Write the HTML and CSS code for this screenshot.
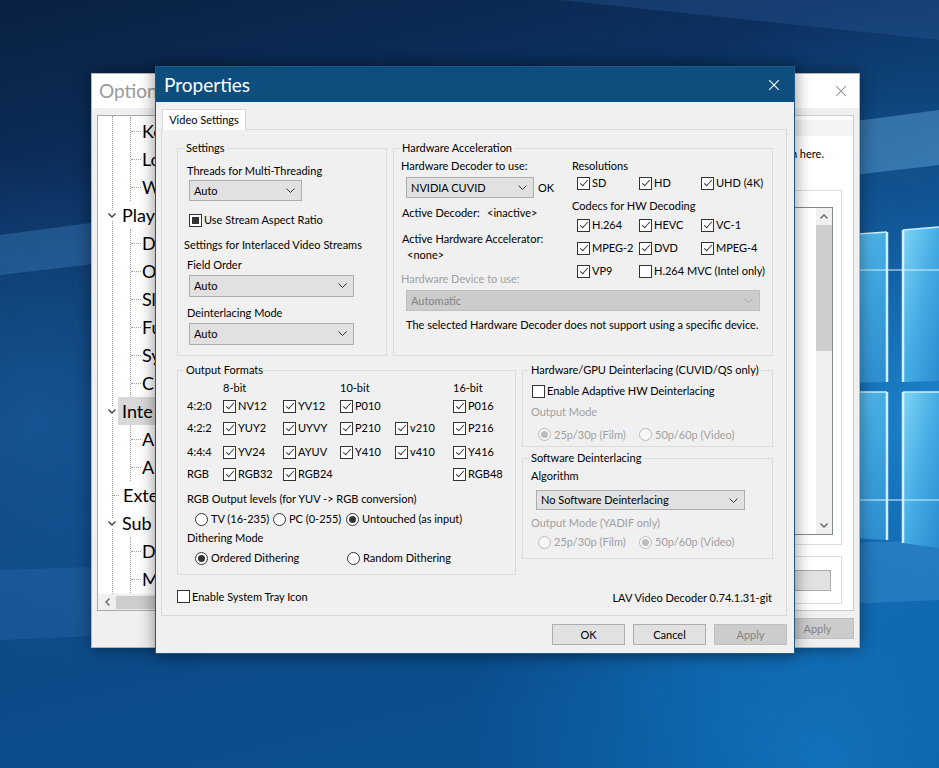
FILE: index.html
```html
<!DOCTYPE html>
<html lang="en">
<head>
  <meta charset="UTF-8">
  <meta name="viewport" content="width=device-width, initial-scale=1.0">
  <title>LAV Video Decoder - Properties</title>
  <link rel="stylesheet" href="styles.css">
</head>
<body>
  <div class="desktop">
    <svg class="wallpaper" viewBox="0 0 939 768" width="939" height="768" aria-hidden="true">
      <defs>
        <linearGradient id="sky" x1="0" y1="0" x2="0.3" y2="1">
          <stop offset="0" stop-color="#0a2142"/>
          <stop offset=".3" stop-color="#0c3363"/>
          <stop offset=".65" stop-color="#0d4682"/>
          <stop offset="1" stop-color="#0a4f8e"/>
        </linearGradient>
        <radialGradient id="glow" cx="930" cy="420" r="430" gradientUnits="userSpaceOnUse">
          <stop offset="0" stop-color="#1e88d2" stop-opacity=".95"/>
          <stop offset=".5" stop-color="#1670b8" stop-opacity=".45"/>
          <stop offset="1" stop-color="#1670b8" stop-opacity="0"/>
        </radialGradient>
        <radialGradient id="glow2" cx="820" cy="760" r="360" gradientUnits="userSpaceOnUse">
          <stop offset="0" stop-color="#1278c4" stop-opacity=".8"/>
          <stop offset="1" stop-color="#1278c4" stop-opacity="0"/>
        </radialGradient>
        <radialGradient id="glow3" cx="40" cy="420" r="260" gradientUnits="userSpaceOnUse">
          <stop offset="0" stop-color="#1a5c9e" stop-opacity=".7"/>
          <stop offset="1" stop-color="#1a5c9e" stop-opacity="0"/>
        </radialGradient>
        <linearGradient id="beam" x1="0" y1="0" x2="1" y2="0">
          <stop offset="0" stop-color="#4a8fd4" stop-opacity=".3"/>
          <stop offset="1" stop-color="#7cc4f5" stop-opacity=".35"/>
        </linearGradient>
        <linearGradient id="pane" x1="0" y1="0" x2="1" y2="1">
          <stop offset="0" stop-color="#7fd4f6"/>
          <stop offset=".5" stop-color="#45ade4"/>
          <stop offset="1" stop-color="#2a8cd0"/>
        </linearGradient>
      </defs>
      <rect width="939" height="768" fill="url(#sky)"/>
      <rect width="939" height="768" fill="url(#glow)"/>
      <rect width="939" height="768" fill="url(#glow2)"/>
      <rect width="939" height="768" fill="url(#glow3)"/>
      <polygon points="0,235 939,110 939,165 0,275" fill="url(#beam)"/>
      <polygon points="0,570 939,540 939,600 0,640" fill="url(#beam)" opacity=".5"/>
      <polygon points="560,0 939,0 939,40" fill="#2a5d9a" opacity=".35"/>
      <polygon points="800,238 887,232 887,382 800,384" fill="url(#pane)"/>
      <polygon points="903,230 939,227 939,381 903,382" fill="url(#pane)"/>
      <polygon points="800,392 887,392 887,540 800,535" fill="url(#pane)"/>
      <polygon points="903,392 939,392 939,548 903,543" fill="url(#pane)"/>
      <path d="M887 232V382M887 392V540M903 230V382M903 392V543" stroke="#e8faff" stroke-width="2.5" opacity=".9"/>
      <path d="M800 238L887 232M903 230L939 227M800 392H887M903 392H939" stroke="#c8f0ff" stroke-width="1.5"/>
      <path d="M860 270H939M860 500H939" stroke="#d6f3ff" stroke-width="2" opacity=".5"/>
    </svg>

    <!-- player options window, behind the dialog -->
    <div class="window options">
      <div class="titlebar">
        <span class="title">Option</span>
        <svg class="close" viewBox="0 0 10 10"><path d="M0 0L10 10M10 0L0 10"/></svg>
      </div>
      <div class="opt-body">
        <div class="tree">
          <div class="tree-list">
            <div class="kids">
              <div class="node">Ke</div>
              <div class="node">Lo</div>
              <div class="node">W</div>
            </div>
            <div class="node root">
              <span class="twisty"><svg width="8" height="5" viewBox="0 0 8 5"><path d="M.5.5L4 4 7.5.5"/></svg></span>
              <span class="label">Play</span>
            </div>
            <div class="kids">
              <div class="node">D</div>
              <div class="node">O</div>
              <div class="node">Sl</div>
              <div class="node">Fu</div>
              <div class="node">Sy</div>
              <div class="node">C</div>
            </div>
            <div class="node root">
              <span class="twisty"><svg width="8" height="5" viewBox="0 0 8 5"><path d="M.5.5L4 4 7.5.5"/></svg></span>
              <span class="label selected">Inte</span>
            </div>
            <div class="kids">
              <div class="node">A</div>
              <div class="node">A</div>
            </div>
            <div class="node root leaf"><span class="label">Exte</span></div>
            <div class="node root">
              <span class="twisty"><svg width="8" height="5" viewBox="0 0 8 5"><path d="M.5.5L4 4 7.5.5"/></svg></span>
              <span class="label">Sub</span>
            </div>
            <div class="kids">
              <div class="node">D</div>
              <div class="node">M</div>
            </div>
          </div>
          <div class="hscroll">
            <svg class="arrow-left" viewBox="0 0 5 8"><path d="M4.5.5L1 4l3.5 3.5"/></svg>
            <div class="hthumb"></div>
          </div>
        </div>
        <div class="opt-panel">
          <div class="opt-head"></div>
          <p class="opt-hint">the settings in here.</p>
          <div class="opt-frame">
            <div class="listbox">
              <div class="vscroll">
                <div class="varrow"><svg viewBox="0 0 8 5"><path d="M.5 4.5L4 1l3.5 3.5"/></svg></div>
                <div class="vthumb"></div>
                <div class="vtrack"></div>
                <div class="varrow"><svg viewBox="0 0 8 5"><path d="M.5.5L4 4l3.5-3.5"/></svg></div>
              </div>
            </div>
          </div>
          <div class="opt-frame small">
            <div class="opt-field"></div>
          </div>
        </div>
      </div>
      <div class="opt-buttons">
        <button class="btn" disabled>Apply</button>
      </div>
    </div>

    <!-- LAV video decoder properties dialog -->
    <div class="window props">
      <div class="titlebar">
        <span class="title">Properties</span>
        <svg class="close" viewBox="0 0 10 10"><path d="M0 0L10 10M10 0L0 10"/></svg>
      </div>
      <div class="dlg-body">
        <div class="tabs"><div class="tab">Video Settings</div></div>
        <div class="tabpage">
          <div class="row1">
            <fieldset class="group g-settings">
              <legend>Settings</legend>
              <div class="gbody">
                <div class="threads-label">Threads for Multi-Threading</div>
                <div class="combo threads-combo"><span>Auto</span><svg class="chev" viewBox="0 0 9 5"><path d="M.5.5l4 4 4-4"/></svg></div>
                <label class="chk aspect"><span class="box mixed"></span>Use Stream Aspect Ratio</label>
                <div class="interlaced">Settings for Interlaced Video Streams</div>
                <div class="field-label">Field Order</div>
                <div class="combo wide-combo"><span>Auto</span><svg class="chev" viewBox="0 0 9 5"><path d="M.5.5l4 4 4-4"/></svg></div>
                <div class="deint-label">Deinterlacing Mode</div>
                <div class="combo wide-combo"><span>Auto</span><svg class="chev" viewBox="0 0 9 5"><path d="M.5.5l4 4 4-4"/></svg></div>
              </div>
            </fieldset>

            <fieldset class="group g-hw">
              <legend>Hardware Acceleration</legend>
              <div class="gbody hw-body">
                <div class="hw-top">
                  <div class="hw-left">
                    <div>Hardware Decoder to use:</div>
                    <div class="decoder-row">
                      <div class="combo decoder-combo"><span>NVIDIA CUVID</span><svg class="chev" viewBox="0 0 9 5"><path d="M.5.5l4 4 4-4"/></svg></div>
                      <span>OK</span>
                    </div>
                    <div class="active-row"><span class="active-key">Active Decoder:</span><span>&lt;inactive&gt;</span></div>
                    <div class="accel-label">Active Hardware Accelerator:</div>
                    <div class="accel-value">&lt;none&gt;</div>
                    <div class="device-label disabled">Hardware Device to use:</div>
                  </div>
                  <div class="hw-right">
                    <div>Resolutions</div>
                    <div class="cb-grid res-grid">
                      <label class="chk"><span class="box on"></span>SD</label>
                      <label class="chk"><span class="box on"></span>HD</label>
                      <label class="chk"><span class="box on"></span>UHD (4K)</label>
                    </div>
                    <div class="codecs-label">Codecs for HW Decoding</div>
                    <div class="cb-grid codec-grid">
                      <label class="chk"><span class="box on"></span>H.264</label>
                      <label class="chk"><span class="box on"></span>HEVC</label>
                      <label class="chk"><span class="box on"></span>VC-1</label>
                      <label class="chk"><span class="box on"></span>MPEG-2</label>
                      <label class="chk"><span class="box on"></span>DVD</label>
                      <label class="chk"><span class="box on"></span>MPEG-4</label>
                      <label class="chk"><span class="box on"></span>VP9</label>
                      <label class="chk"><span class="box"></span>H.264 MVC (Intel only)</label>
                    </div>
                  </div>
                </div>
                <div class="combo disabled device-combo"><span>Automatic</span><svg class="chev" viewBox="0 0 9 5"><path d="M.5.5l4 4 4-4"/></svg></div>
                <div class="hw-note">The selected Hardware Decoder does not support using a specific device.</div>
              </div>
            </fieldset>
          </div>

          <div class="row2">
            <fieldset class="group g-output">
              <legend>Output Formats</legend>
              <div class="gbody">
                <div class="fmt-grid">
                  <span></span><span>8-bit</span><span></span><span>10-bit</span><span></span><span>16-bit</span>
                  <span>4:2:0</span>
                  <label class="chk"><span class="box on"></span>NV12</label>
                  <label class="chk"><span class="box on"></span>YV12</label>
                  <label class="chk"><span class="box on"></span>P010</label>
                  <span></span>
                  <label class="chk"><span class="box on"></span>P016</label>
                  <span>4:2:2</span>
                  <label class="chk"><span class="box on"></span>YUY2</label>
                  <label class="chk"><span class="box on"></span>UYVY</label>
                  <label class="chk"><span class="box on"></span>P210</label>
                  <label class="chk"><span class="box on"></span>v210</label>
                  <label class="chk"><span class="box on"></span>P216</label>
                  <span>4:4:4</span>
                  <label class="chk"><span class="box on"></span>YV24</label>
                  <label class="chk"><span class="box on"></span>AYUV</label>
                  <label class="chk"><span class="box on"></span>Y410</label>
                  <label class="chk"><span class="box on"></span>v410</label>
                  <label class="chk"><span class="box on"></span>Y416</label>
                  <span>RGB</span>
                  <label class="chk"><span class="box on"></span>RGB32</label>
                  <label class="chk"><span class="box on"></span>RGB24</label>
                  <span></span><span></span>
                  <label class="chk"><span class="box on"></span>RGB48</label>
                </div>
                <div class="levels-label">RGB Output levels (for YUV -&gt; RGB conversion)</div>
                <div class="radio-row levels-row">
                  <label class="opt w78"><span class="radio"></span>TV (16-235)</label>
                  <label class="opt w73"><span class="radio"></span>PC (0-255)</label>
                  <label class="opt"><span class="radio on"></span>Untouched (as input)</label>
                </div>
                <div class="dither-label">Dithering Mode</div>
                <div class="radio-row dither-row">
                  <label class="opt w152"><span class="radio on"></span>Ordered Dithering</label>
                  <label class="opt"><span class="radio"></span>Random Dithering</label>
                </div>
              </div>
            </fieldset>

            <div class="right-col">
              <fieldset class="group g-hwdeint">
                <legend>Hardware/GPU Deinterlacing (CUVID/QS only)</legend>
                <div class="gbody">
                  <label class="chk adaptive"><span class="box"></span>Enable Adaptive HW Deinterlacing</label>
                  <div class="disabled mode-label">Output Mode</div>
                  <div class="radio-row mode-row">
                    <label class="opt disabled w101"><span class="radio on"></span>25p/30p (Film)</label>
                    <label class="opt disabled"><span class="radio"></span>50p/60p (Video)</label>
                  </div>
                </div>
              </fieldset>
              <fieldset class="group g-swdeint">
                <legend>Software Deinterlacing</legend>
                <div class="gbody">
                  <div class="algo-label">Algorithm</div>
                  <div class="combo algo-combo"><span>No Software Deinterlacing</span><svg class="chev" viewBox="0 0 9 5"><path d="M.5.5l4 4 4-4"/></svg></div>
                  <div class="disabled yadif-label">Output Mode (YADIF only)</div>
                  <div class="radio-row yadif-row">
                    <label class="opt disabled w101"><span class="radio"></span>25p/30p (Film)</label>
                    <label class="opt disabled"><span class="radio on"></span>50p/60p (Video)</label>
                  </div>
                </div>
              </fieldset>
            </div>
          </div>

          <div class="tray-row">
            <label class="chk"><span class="box"></span>Enable System Tray Icon</label>
            <span class="version">LAV Video Decoder 0.74.1.31-git</span>
          </div>
        </div>
        <div class="dlg-buttons">
          <button class="btn">OK</button>
          <button class="btn">Cancel</button>
          <button class="btn" disabled>Apply</button>
        </div>
      </div>
    </div>
  </div>
</body>
</html>
```

FILE: styles.css
```css
/* Base */
* {
  margin: 0;
  padding: 0;
  box-sizing: border-box;
}

body {
  width: 939px;
  height: 768px;
  overflow: hidden;
  font-family: Lato, "Noto Sans", sans-serif;
  color: #000;
}

.desktop {
  position: relative;
  width: 939px;
  height: 768px;
  overflow: hidden;
  background: #0b3a70;
}

.wallpaper {
  position: absolute;
  left: 0;
  top: 0;
  display: block;
}

/* Windows */
.window {
  position: absolute;
  display: flex;
  flex-direction: column;
  background: #f0f0f0;
  box-shadow: 0 0 16px rgba(0, 0, 0, 0.45);
}

.options {
  left: 91px;
  top: 73px;
  width: 769px;
  height: 575px;
  border: 1px solid #b4b4b4;
}

.props {
  left: 155px;
  top: 66px;
  width: 640px;
  height: 588px;
  border: 1px solid #1c5a8a;
}

.titlebar {
  display: flex;
  align-items: center;
  flex: none;
}

.title {
  font-size: 19px;
  line-height: 24px;
}

.close {
  margin-left: auto;
  width: 10px;
  height: 10px;
  fill: none;
  stroke-width: 1.1;
}

.options .titlebar {
  height: 34px;
  background: #fff;
  padding: 0 13px 0 7px;
}

.options .title {
  color: #9a9a9a;
}

.options .close {
  stroke: #999;
}

.props .titlebar {
  height: 35px;
  background: #0e4e7e;
  padding: 0 15px 0 8px;
}

.props .title {
  color: #fff;
}

.props .close {
  stroke: #fff;
}

/* Options window content */
.opt-body {
  display: flex;
  padding: 7px 5px 0 5px;
}

.tree {
  width: 200px;
  height: 496px;
  flex: none;
  display: flex;
  flex-direction: column;
  border: 1px solid #a9a9a9;
  background: #fff;
  font-size: 18px;
}

.tree-list {
  flex: 1;
  margin-left: 14px;
  padding-top: 1px;
  border-left: 1px dotted #a0a0a0;
}

.node {
  height: 28px;
  display: flex;
  align-items: center;
  white-space: nowrap;
}

.kids {
  margin-left: 17px;
  border-left: 1px dotted #a0a0a0;
}

.kids .node::before {
  content: "";
  flex: none;
  width: 10px;
  margin-right: 1px;
  border-top: 1px dotted #a0a0a0;
}

.twisty {
  flex: none;
  width: 10px;
  height: 10px;
  margin-left: -6px;
  display: flex;
  align-items: center;
  justify-content: center;
  background: #fff;
}

.twisty svg {
  display: block;
  width: 8px;
  height: 5px;
  fill: none;
  stroke: #404040;
  stroke-width: 1.4;
}

.root .label {
  margin-left: 1px;
  padding: 0 4px;
  line-height: 28px;
}

.leaf::before {
  content: "";
  flex: none;
  width: 6px;
  border-top: 1px dotted #a0a0a0;
}

.leaf .label {
  margin-left: 0;
}

.label.selected {
  background: #d9d9d9;
}

.hscroll {
  height: 16px;
  flex: none;
  display: flex;
  align-items: center;
  padding-left: 7px;
  background: #f0f0f0;
}

.arrow-left {
  width: 5px;
  height: 8px;
  fill: none;
  stroke: #606060;
  stroke-width: 1.3;
}

.hthumb {
  flex: 1;
  height: 13px;
  margin-left: 6px;
  background: #cdcdcd;
}

.opt-panel {
  flex: 1;
  height: 496px;
  margin-left: 6px;
  display: flex;
  flex-direction: column;
  border: 1px solid #cacaca;
  background: #fff;
}

.opt-head {
  height: 16px;
  margin-top: 4px;
  background: linear-gradient(to right, #fff, #f3f3f3 40%, #f3f3f3);
}

.opt-hint {
  margin: 10px 29px 0 0;
  text-align: right;
  font-size: 11px;
  line-height: 16px;
  white-space: nowrap;
}

.opt-frame {
  height: 355px;
  margin: 28px 11px 0 10px;
  padding: 16px 8px 0 10px;
  border: 1px solid #dcdcdc;
}

.listbox {
  height: 328px;
  display: flex;
  justify-content: flex-end;
  border: 1px solid #828790;
  background: #fff;
}

.vscroll {
  width: 16px;
  display: flex;
  flex-direction: column;
  background: #f0f0f0;
}

.varrow {
  height: 17px;
  display: flex;
  align-items: center;
  justify-content: center;
}

.varrow svg {
  width: 8px;
  height: 5px;
  fill: none;
  stroke: #606060;
  stroke-width: 1.3;
}

.vthumb {
  height: 126px;
  background: #cdcdcd;
}

.vtrack {
  flex: 1;
}

.opt-frame.small {
  height: 48px;
  margin-top: 11px;
  padding: 13px 10px 0 10px;
}

.opt-field {
  height: 21px;
  border: 1px solid #adadad;
  background: #e1e1e1;
}

.opt-buttons {
  display: flex;
  justify-content: flex-end;
  padding: 7px 5px 0;
}

/* Buttons */
.btn {
  width: 73px;
  height: 21px;
  border: 1px solid #adadad;
  background: #e1e1e1;
  font-family: inherit;
  font-size: 11px;
  color: #000;
  text-align: center;
}

.btn:disabled {
  border-color: #bfbfbf;
  background: #cccccc;
  color: #838383;
}

/* Dialog */
.dlg-body {
  flex: 1;
  display: flex;
  flex-direction: column;
  padding: 7px 7px 0 5px;
  font-size: 11px;
  line-height: 16px;
}

.tabs {
  display: flex;
  height: 20px;
  padding-left: 1px;
}

.tab {
  position: relative;
  z-index: 1;
  width: 84px;
  height: 21px;
  display: flex;
  align-items: center;
  justify-content: center;
  border: 1px solid #d9d9d9;
  border-bottom: none;
  background: #fff;
}

.tabpage {
  height: 487px;
  display: flex;
  flex-direction: column;
  padding: 11px 13px 0 15px;
  border: 1px solid #d9d9d9;
  background: #f0f0f0;
}

.row1,
.row2 {
  display: flex;
  gap: 6px;
}

.row2 {
  margin-top: 7px;
}

.group {
  min-width: 0;
  border: 1px solid #dcdcdc;
}

.group legend {
  margin-left: 6px;
  padding: 0 2px;
  line-height: 14px;
}

.g-settings { width: 210px; height: 215px; }
.g-hw { width: 380px; height: 215px; }
.g-output { width: 339px; height: 212px; }
.g-hwdeint { height: 84px; }
.g-swdeint { height: 108px; }

.gbody {
  padding-left: 8px;
}

.g-settings .gbody,
.g-output .gbody {
  padding-left: 9px;
}

.hw-body {
  padding-left: 7px;
}

.right-col {
  width: 251px;
  display: flex;
  flex-direction: column;
  gap: 4px;
}

.disabled {
  color: #a0a0a0;
}

/* Combo boxes */
.combo {
  height: 21px;
  display: flex;
  align-items: center;
  padding: 0 6px 0 4px;
  border: 1px solid #adadad;
  background: #e1e1e1;
  white-space: nowrap;
}

.chev {
  flex: none;
  width: 9px;
  height: 5px;
  margin-left: auto;
  fill: none;
  stroke: #333;
}

.combo.disabled {
  border-color: #bfbfbf;
  background: #cccccc;
  color: #838383;
}

.combo.disabled .chev {
  stroke: #a8a8a8;
}

/* Check boxes and radios */
.chk,
.opt {
  height: 16px;
  display: inline-flex;
  align-items: center;
  white-space: nowrap;
}

.chk {
  gap: 2px;
}

.opt {
  gap: 3px;
}

.box {
  position: relative;
  width: 13px;
  height: 13px;
  flex: none;
  border: 1px solid #333;
  background: #fff;
}

.box.on::after {
  content: "";
  position: absolute;
  left: 3.5px;
  top: 0.5px;
  width: 3px;
  height: 7px;
  border: solid #333;
  border-width: 0 1.2px 1.2px 0;
  transform: rotate(42deg);
}

.box.mixed::after {
  content: "";
  position: absolute;
  inset: 2px;
  background: #333;
}

.radio {
  position: relative;
  width: 13px;
  height: 13px;
  flex: none;
  border: 1px solid #333;
  border-radius: 50%;
  background: #fff;
}

.radio.on::after {
  content: "";
  position: absolute;
  inset: 2px;
  border-radius: 50%;
  background: #333;
}

.opt.disabled .radio {
  border-color: #bcbcbc;
  background: #f6f6f6;
}

.opt.disabled .radio.on::after {
  background: #bcbcbc;
}

.w73 { width: 73px; }
.w78 { width: 78px; }
.w101 { width: 101px; }
.w152 { width: 152px; }

.radio-row {
  display: flex;
}

/* Settings group */
.threads-label { margin-top: 8px; }
.threads-combo { width: 113px; margin: 1px 0 0 2px; }
.aspect { margin: 11px 0 0 2px; }
.interlaced { margin: 6px 0 0 -3px; }
.field-label { margin-top: 4px; }
.wide-combo { width: 165px; height: 22px; margin: 2px 0 0 2px; }
.deint-label { margin-top: 8px; }

/* Hardware acceleration group */
.hw-top {
  display: flex;
  margin-top: 3px;
}

.hw-left {
  width: 171px;
}

.decoder-row {
  display: flex;
  align-items: center;
  gap: 4px;
  margin: 3px 0 0 5px;
}

.decoder-combo { width: 128px; }

.active-row {
  display: flex;
  margin: 7px 0 0 1px;
}

.active-key { width: 85px; }
.accel-label { margin: 10px 0 0 1px; }
.accel-value { margin-left: 6px; }
.device-label { margin-top: 8px; }

.cb-grid {
  display: grid;
  grid-template-columns: 62px 62px auto;
  padding-left: 5px;
}

.res-grid { margin-top: 1px; }
.codecs-label { margin-top: 7px; }

.codec-grid {
  margin-top: 3px;
  row-gap: 7px;
}

.device-combo { width: 354px; margin: 3px 0 0 5px; }
.hw-note { margin: 6px 0 0 5px; white-space: nowrap; }

/* Output formats group */
.fmt-grid {
  display: grid;
  grid-template-columns: 36px 60px 57px 55px 58px auto;
  grid-template-rows: 18px 22px 24px 22px 16px;
  align-items: start;
  margin-top: 3px;
}

.fmt-grid > span {
  height: 16px;
}

.levels-label { margin-top: 9px; }
.levels-row { margin: 4px 0 0 8px; }
.dither-label { margin-top: 3px; }
.dither-row { margin: 4px 0 0 8px; }

/* Deinterlacing groups */
.adaptive { margin: 6px 0 0 1px; }
.mode-label { margin-top: 2px; }
.mode-row { margin: 7px 0 0 7px; }
.algo-label { margin-top: 3px; }
.algo-combo { width: 209px; height: 20px; margin: 6px 0 0 5px; }
.yadif-label { margin-top: 5px; }
.yadif-row { margin: 3px 0 0 7px; }

.tray-row {
  display: flex;
  justify-content: space-between;
  align-items: center;
  margin-top: 12px;
  padding-right: 1px;
}

.version {
  margin-top: 3px;
}

.dlg-buttons {
  display: flex;
  justify-content: flex-end;
  gap: 8px;
  margin-top: 8px;
}
```
